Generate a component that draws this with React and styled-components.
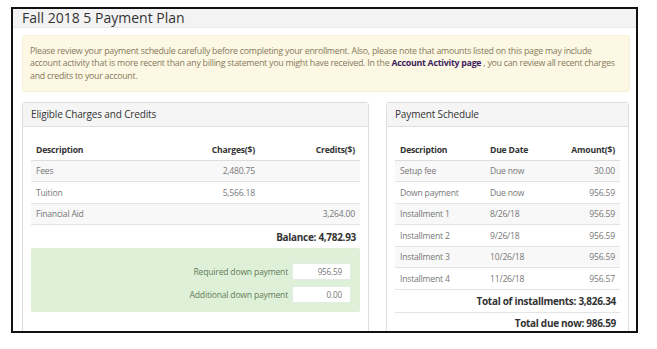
import styled, { createGlobalStyle } from "styled-components";

const GlobalStyle = createGlobalStyle`
  html, body {
    margin: 0;
    padding: 0;
    background: #fff;
  }
  body {
    font-family: "Open Sans", "Noto Sans", sans-serif;
    color: #333;
  }
`;

const charges = [
  { desc: "Fees", charge: "2,480.75", credit: "" },
  { desc: "Tuition", charge: "5,566.18", credit: "" },
  { desc: "Financial Aid", charge: "", credit: "3,264.00" },
];

const schedule = [
  { desc: "Setup fee", due: "Due now", amount: "30.00" },
  { desc: "Down payment", due: "Due now", amount: "956.59" },
  { desc: "Installment 1", due: "8/26/18", amount: "956.59" },
  { desc: "Installment 2", due: "9/26/18", amount: "956.59" },
  { desc: "Installment 3", due: "10/26/18", amount: "956.59" },
  { desc: "Installment 4", due: "11/26/18", amount: "956.57" },
];

const App = () => {
  return (
    <>
      <GlobalStyle />
      <Frame>
        <PageHeader>Fall 2018 5 Payment Plan</PageHeader>
        <Content>
          <Alert>
            Please review your payment schedule carefully before completing
            your enrollment. Also, please note that amounts listed on this page
            may include account activity that is more recent than any billing
            statement you might have received. In the{" "}
            <AlertLink href="#">Account Activity page</AlertLink> , you can
            review all recent charges and credits to your account.
          </Alert>

          <Panels>
            <Panel>
              <PanelHeading>Eligible Charges and Credits</PanelHeading>
              <PanelBody>
                <Table $cols="1fr 100px 100px">
                  <HeadRow>
                    <Cell>Description</Cell>
                    <Cell $right>Charges($)</Cell>
                    <Cell $right>Credits($)</Cell>
                  </HeadRow>
                  {charges.map((row, i) => (
                    <Row key={row.desc} $striped={i % 2 === 0}>
                      <Cell>{row.desc}</Cell>
                      <Cell $right>{row.charge}</Cell>
                      <Cell $right>{row.credit}</Cell>
                    </Row>
                  ))}
                </Table>
                <Total $height={23}>Balance: 4,782.93</Total>
                <DownPayment>
                  <Field>
                    <FieldLabel>Required down payment</FieldLabel>
                    <AmountInput value="956.59" readOnly />
                  </Field>
                  <Field>
                    <FieldLabel>Additional down payment</FieldLabel>
                    <AmountInput value="0.00" readOnly />
                  </Field>
                </DownPayment>
              </PanelBody>
            </Panel>

            <Panel>
              <PanelHeading>Payment Schedule</PanelHeading>
              <PanelBody>
                <Table $cols="90px 1fr 1fr">
                  <HeadRow>
                    <Cell>Description</Cell>
                    <Cell>Due Date</Cell>
                    <Cell $right>Amount($)</Cell>
                  </HeadRow>
                  {schedule.map((row, i) => (
                    <Row key={row.desc} $striped={i % 2 === 0}>
                      <Cell>{row.desc}</Cell>
                      <Cell>{row.due}</Cell>
                      <Cell $right>{row.amount}</Cell>
                    </Row>
                  ))}
                </Table>
                <Total $height={23} $line>
                  Total of installments: 3,826.34
                </Total>
                <Total $height={22} $line>
                  Total due now: 986.59
                </Total>
              </PanelBody>
            </Panel>
          </Panels>
        </Content>
      </Frame>
    </>
  );
};

export default App;

const Frame = styled.div`
  box-sizing: border-box;
  margin: 7px 0 0 11px;
  width: 627px;
  height: 326px;
  border: 2px solid #111;
  overflow: hidden;
  background: #fff;
`;

const PageHeader = styled.div`
  height: 18px;
  line-height: 18px;
  padding-left: 9px;
  background: #f3f3f3;
  border-bottom: 1px solid #e8e8e8;
  font-size: 14px;
  color: #333;
`;

const Content = styled.div`
  padding: 7px 6px 0 9px;
`;

const Alert = styled.div`
  background: #fcf8e3;
  border: 1px solid #f8f0d6;
  border-radius: 3px;
  padding: 9px 7px;
  font-size: 8.8px;
  letter-spacing: -0.25px;
  line-height: 12.3px;
  color: #87795d;
`;

const AlertLink = styled.a`
  color: #3d1d5e;
  font-weight: 700;
  text-decoration: none;
`;

const Panels = styled.div`
  display: grid;
  grid-template-columns: 347px 243px;
  column-gap: 17px;
  align-items: start;
  margin-top: 10px;
`;

const Panel = styled.div`
  border: 1px solid #ddd;
  border-radius: 3px;
  background: #fff;
`;

const PanelHeading = styled.div`
  height: 23px;
  line-height: 23px;
  padding: 0 8px;
  background: #f5f5f5;
  border-bottom: 1px solid #e0e0e0;
  font-size: 10px;
  letter-spacing: -0.15px;
  color: #333;
`;

const PanelBody = styled.div`
  padding: 13px 8px 20px;
`;

const Table = styled.div`
  display: grid;
  grid-template-columns: ${({ $cols }) => $cols};
  font-size: 8.6px;
  letter-spacing: -0.2px;
`;

const HeadRow = styled.div`
  display: contents;
  font-weight: 700;
  color: #333;

  & > div {
    height: 21px;
    border-bottom: 1px solid #ddd;
  }
`;

const Row = styled.div`
  display: contents;
  color: #777;

  & > div {
    height: 21.5px;
    border-bottom: 1px solid #e4e4e4;
    background: ${({ $striped }) => ($striped ? "#f8f8f8" : "#fff")};
  }
`;

const Cell = styled.div`
  box-sizing: border-box;
  display: flex;
  align-items: center;
  justify-content: ${({ $right }) => ($right ? "flex-end" : "flex-start")};
  padding: 0 5px;
  white-space: nowrap;
`;

const Total = styled.div`
  box-sizing: border-box;
  height: ${({ $height }) => $height}px;
  display: flex;
  align-items: center;
  justify-content: flex-end;
  padding: 0 4px;
  font-size: 10px;
  letter-spacing: -0.3px;
  font-weight: 700;
  color: #333;
  border-bottom: ${({ $line }) => ($line ? "1px solid #e4e4e4" : "none")};
`;

const DownPayment = styled.div`
  display: flex;
  flex-direction: column;
  gap: 6px;
  padding: 15px 9px 9px;
  background: #dff0d8;
  border-radius: 2px;
`;

const Field = styled.div`
  display: flex;
  justify-content: flex-end;
  align-items: center;
  gap: 4px;
`;

const FieldLabel = styled.label`
  font-size: 8.6px;
  letter-spacing: -0.2px;
  color: #5f7d5a;
`;

const AmountInput = styled.input`
  box-sizing: border-box;
  width: 59px;
  height: 17px;
  padding: 0 8px;
  border: 1px solid #e3ece0;
  background: #fff;
  font-family: inherit;
  font-size: 8.2px;
  letter-spacing: -0.2px;
  color: #777;
  text-align: right;
  outline: none;
`;
